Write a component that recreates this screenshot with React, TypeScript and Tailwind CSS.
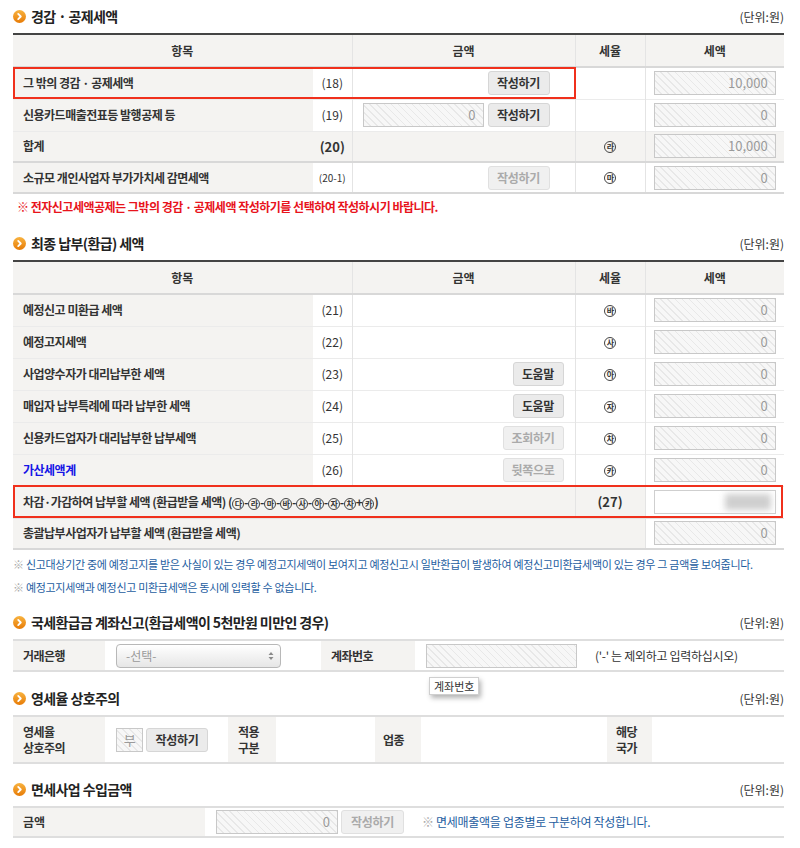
import clsx from "clsx";
import type { ReactNode } from "react";

const HATCH =
  "bg-[repeating-linear-gradient(45deg,#f7f7f7_0px,#f7f7f7_4px,#e8e8e8_4px,#e8e8e8_5px)]";

const Bullet = () => (
  <svg width="13" height="13" viewBox="0 0 13 13" className="shrink-0">
    <defs>
      <linearGradient id="bul" x1="0" y1="0" x2="0" y2="1">
        <stop offset="0" stopColor="#f8b340" />
        <stop offset="1" stopColor="#e77b06" />
      </linearGradient>
    </defs>
    <circle cx="6.5" cy="6.5" r="6.5" fill="url(#bul)" />
    <path d="M5.2 3.9 L7.8 6.5 L5.2 9.1" fill="none" stroke="#fff" strokeWidth="1.8" strokeLinecap="round" strokeLinejoin="round" />
  </svg>
);

// circled hangul mark (㉰, ㉱ ...)
const Circ = ({ ch }: { ch: string }) => (
  <span className="inline-flex h-[12px] w-[12px] items-center justify-center rounded-full border border-[#444] align-middle text-[8px] font-bold leading-none tracking-[-0.8px] text-[#333]">
    {ch}
  </span>
);

const SectionTitle = ({ title }: { title: string }) => (
  <div className="flex h-[33px] items-center justify-between">
    <div className="flex items-center gap-[5px]">
      <Bullet />
      <h2 className="text-[14px] font-bold tracking-[-0.6px] text-[#222]">{title}</h2>
    </div>
    <span className="text-[12px] text-[#333]">(단위:원)</span>
  </div>
);

const ReadOnly = ({ value, className, center }: { value: string; className?: string; center?: boolean }) => (
  <div
    className={clsx(
      "h-6 border border-[#c8c8c8] text-[13px] leading-[22px] text-[#9a9a9a]",
      center ? "text-center" : "pr-[7px] text-right",
      HATCH,
      className
    )}
  >
    {value}
  </div>
);

const Btn = ({ children, disabled, className }: { children: ReactNode; disabled?: boolean; className?: string }) => (
  <button
    type="button"
    className={clsx(
      "h-6 rounded-[3px] border text-[12px] font-bold leading-none tracking-[-0.3px]",
      disabled ? "border-[#e0e0e0] bg-[#f0f0f0] text-[#aaa]" : "border-[#d6d6d6] bg-[#ebebeb] text-[#333]",
      className
    )}
  >
    {children}
  </button>
);

const Note = ({ children }: { children: ReactNode }) => (
  <p className="text-[11px] leading-[23px] tracking-[-0.3px] text-[#1d5d9f]">
    <span className="text-[#aaa]">※</span> {children}
  </p>
);

type Row = {
  label: ReactNode;
  no: string;
  amount?: ReactNode;
  rate?: string;
  tax: string;
  total?: boolean;
};

const rows1: Row[] = [
  {
    label: "그 밖의 경감 · 공제세액",
    no: "(18)",
    amount: <Btn className="w-[62px]">작성하기</Btn>,
    tax: "10,000",
  },
  {
    label: "신용카드매출전표등 발행공제 등",
    no: "(19)",
    amount: (
      <div className="flex justify-end gap-1">
        <ReadOnly value="0" className="w-[121px]" />
        <Btn className="w-[62px]">작성하기</Btn>
      </div>
    ),
    tax: "0",
  },
  { label: "합계", no: "(20)", rate: "라", tax: "10,000", total: true },
  {
    label: "소규모 개인사업자 부가가치세 감면세액",
    no: "(20-1)",
    amount: (
      <Btn disabled className="w-[62px]">
        작성하기
      </Btn>
    ),
    rate: "마",
    tax: "0",
  },
];

const rows2: Row[] = [
  { label: "예정신고 미환급 세액", no: "(21)", rate: "바", tax: "0" },
  { label: "예정고지세액", no: "(22)", rate: "사", tax: "0" },
  { label: "사업양수자가 대리납부한 세액", no: "(23)", amount: <Btn className="w-[51px]">도움말</Btn>, rate: "아", tax: "0" },
  { label: "매입자 납부특례에 따라 납부한 세액", no: "(24)", amount: <Btn className="w-[51px]">도움말</Btn>, rate: "자", tax: "0" },
  {
    label: "신용카드업자가 대리납부한 납부세액",
    no: "(25)",
    amount: (
      <Btn disabled className="w-[61px]">
        조회하기
      </Btn>
    ),
    rate: "차",
    tax: "0",
  },
  {
    label: <span className="text-[#1515e6]">가산세액계</span>,
    no: "(26)",
    amount: (
      <Btn disabled className="w-[61px]">
        뒷쪽으로
      </Btn>
    ),
    rate: "카",
    tax: "0",
  },
];

const ColsMain = () => (
  <colgroup>
    <col className="w-[300px]" />
    <col className="w-[39px]" />
    <col className="w-[223px]" />
    <col className="w-[70px]" />
    <col />
  </colgroup>
);

const HeadMain = () => (
  <thead>
    <tr className="h-[33px] border-t-2 border-b-2 border-t-[#444] border-b-[#d8d8d8] bg-[#f4f3f1] text-[12px] font-bold">
      <th colSpan={2}>항목</th>
      <th className="border-l border-[#e4e4e4]">금액</th>
      <th className="border-l border-[#e4e4e4]">세율</th>
      <th className="border-l border-[#e4e4e4]">세액</th>
    </tr>
  </thead>
);

const MainRow = ({ r, pr, last }: { r: Row; pr: string; last?: boolean }) => (
  <tr
    className={clsx(
      r.total || last ? "h-[31px] border-b-2 border-[#d8d8d8]" : "h-[32px] border-b border-[#ebebeb]",
      r.total && "bg-[#f4f3f1]"
    )}
  >
    <td className="bg-[#f4f3f1] pl-[10px] font-bold tracking-[-0.5px]">{r.label}</td>
    <td
      className={clsx(
        "text-center",
        r.total ? "text-[13px] font-bold" : r.no.length > 4 ? "text-[10px]" : "text-[12px]"
      )}
    >
      {r.no}
    </td>
    <td className={clsx("border-l border-[#e4e4e4] text-right", pr)}>
      <div className="flex justify-end">{r.amount}</div>
    </td>
    <td className="border-l border-[#e4e4e4] text-center leading-none">{r.rate && <Circ ch={r.rate} />}</td>
    <td className="border-l border-[#e4e4e4]">
      <ReadOnly value={r.tax} className="mx-auto w-[122px]" />
    </td>
  </tr>
);

const FORMULA = ["다", "라", "마", "바", "사", "아", "자", "차"];

export default function App() {
  return (
    <div className="min-h-[848px] bg-white font-[family-name:'Noto_Sans_CJK_KR','Noto_Sans',sans-serif] text-[12px] text-[#333]">
      <div className="ml-[13px] w-[771px]">
        {/* 경감 · 공제세액 */}
        <SectionTitle title="경감 · 공제세액" />
        <div className="relative">
          <table className="w-full table-fixed border-collapse">
            <ColsMain />
            <HeadMain />
            <tbody>
              {rows1.map((r, i) => (
                <MainRow key={r.no} r={r} pr="pr-[25px]" last={i === rows1.length - 1} />
              ))}
            </tbody>
          </table>
          <div className="pointer-events-none absolute left-0 top-[34px] h-[32px] w-[563px] border-2 border-[#f0301c]" />
        </div>
        <p className="h-[26px] pl-[4px] text-[12px] font-bold leading-[26px] tracking-[-0.5px] text-[#e8141c]">
          ※ 전자신고세액공제는 그밖의 경감 · 공제세액 작성하기를 선택하여 작성하시기 바랍니다.
        </p>

        {/* 최종 납부(환급) 세액 */}
        <div className="mt-[7px]">
          <SectionTitle title="최종 납부(환급) 세액" />
        </div>
        <div className="relative">
          <table className="w-full table-fixed border-collapse">
            <ColsMain />
            <HeadMain />
            <tbody>
              {rows2.map((r) => (
                <MainRow key={r.no} r={r} pr="pr-[11px]" />
              ))}
              <tr className="h-[32px] border-b border-[#e4e4e4] bg-[#f4f3f1]">
                <td colSpan={3} className="pl-[10px] font-bold tracking-[-0.5px]">
                  차감·가감하여 납부할 세액 (환급받을 세액) (
                  {FORMULA.map((c, i) => (
                    <span key={c}>
                      {i > 0 && "-"}
                      <Circ ch={c} />
                    </span>
                  ))}
                  +<Circ ch="카" />)
                </td>
                <td className="border-l border-[#e4e4e4] text-center text-[13px] font-bold">(27)</td>
                <td className="border-l border-[#e4e4e4] bg-white">
                  <div className="mx-auto flex h-6 w-[122px] items-center justify-end border border-[#cfcfcf] bg-white pr-[4px]">
                    <div className="h-[16px] w-[46px] bg-[#cfcfcf] blur-[3px]" />
                  </div>
                </td>
              </tr>
              <tr className="h-[31px] border-b-2 border-[#d8d8d8]">
                <td colSpan={4} className="bg-[#f4f3f1] pl-[10px] font-bold tracking-[-0.5px]">
                  총괄납부사업자가 납부할 세액 (환급받을 세액)
                </td>
                <td className="border-l border-[#e4e4e4]">
                  <ReadOnly value="0" className="mx-auto w-[122px]" />
                </td>
              </tr>
            </tbody>
          </table>
          <div className="pointer-events-none absolute left-0 top-[225px] h-[33px] w-[770px] border-2 border-[#f0301c]" />
        </div>
        <div className="pt-[3px]">
          <Note>
            신고대상기간 중에 예정고지를 받은 사실이 있는 경우 예정고지세액이 보여지고 예정신고시 일반환급이 발생하여
            예정신고미환급세액이 있는 경우 그 금액을 보여줍니다.
          </Note>
          <Note>예정고지세액과 예정신고 미환급세액은 동시에 입력할 수 없습니다.</Note>
        </div>

        {/* 국세환급금 계좌신고 */}
        <div className="mt-[7px]">
          <SectionTitle title="국세환급금 계좌신고(환급세액이 5천만원 미만인 경우)" />
        </div>
        <div className="relative">
          <table className="w-full table-fixed border-collapse">
            <colgroup>
              <col className="w-[92px]" />
              <col className="w-[216px]" />
              <col className="w-[94px]" />
              <col />
            </colgroup>
            <tbody>
              <tr className="h-[31px] border-y-2 border-[#dedede]">
                <td className="bg-[#f4f3f1] pl-[10px] font-bold tracking-[-0.5px]">거래은행</td>
                <td className="pl-[11px]">
                  <div className="flex h-6 w-[165px] items-center justify-between rounded-[4px] border border-[#b8b8b8] bg-[linear-gradient(#ffffff,#e6e6e6)] pl-[9px] pr-[6px] text-[12px] text-[#9a9a9a] shadow-[inset_0_1px_0_#fff]">
                    <span>-선택-</span>
                    <svg width="6" height="10" viewBox="0 0 6 10">
                      <path d="M3 1 L5.5 4 H0.5 Z M3 9 L5.5 6 H0.5 Z" fill="#8a8a8a" />
                    </svg>
                  </div>
                </td>
                <td className="bg-[#f4f3f1] pl-[10px] font-bold tracking-[-0.5px]">계좌번호</td>
                <td className="pl-[11px]">
                  <div className="flex items-center gap-[18px]">
                    <ReadOnly value="" className="w-[151px]" />
                    <span className="text-[12px] tracking-[-0.3px] text-[#333]">('-' 는 제외하고 입력하십시오)</span>
                  </div>
                </td>
              </tr>
            </tbody>
          </table>
          <div className="absolute left-[416px] top-[38px] z-10 border border-[#cfcfcf] bg-white px-[4px] text-[11px] leading-[16px] text-[#333] shadow-[2px_3px_5px_rgba(0,0,0,0.3)]">
            계좌번호
          </div>
        </div>

        {/* 영세율 상호주의 */}
        <div className="mt-[10px]">
          <SectionTitle title="영세율 상호주의" />
        </div>
        <table className="w-full table-fixed border-collapse">
          <colgroup>
            <col className="w-[92px]" />
            <col className="w-[123px]" />
            <col className="w-[48px]" />
            <col className="w-[99px]" />
            <col className="w-[46px]" />
            <col className="w-[186px]" />
            <col className="w-[45px]" />
            <col />
          </colgroup>
          <tbody>
            <tr className="h-[47px] border-y-2 border-[#dedede] font-bold leading-[16px] tracking-[-0.5px]">
              <td className="bg-[#f4f3f1] pl-[10px]">
                영세율
                <br />
                상호주의
              </td>
              <td className="pl-[11px]">
                <div className="flex gap-[3px]">
                  <ReadOnly value="부" center className="w-[27px] font-normal" />
                  <Btn className="w-[62px]">작성하기</Btn>
                </div>
              </td>
              <td className="bg-[#f4f3f1] pl-[10px]">
                적용
                <br />
                구분
              </td>
              <td />
              <td className="bg-[#f4f3f1] pl-[8px]">업종</td>
              <td />
              <td className="bg-[#f4f3f1] pl-[9px]">
                해당
                <br />
                국가
              </td>
              <td />
            </tr>
          </tbody>
        </table>

        {/* 면세사업 수입금액 */}
        <div className="mt-[9px]">
          <SectionTitle title="면세사업 수입금액" />
        </div>
        <table className="w-full table-fixed border-collapse">
          <colgroup>
            <col className="w-[192px]" />
            <col />
          </colgroup>
          <tbody>
            <tr className="h-[30px] border-y-2 border-[#dedede]">
              <td className="bg-[#f4f3f1] pl-[10px] font-bold">금액</td>
              <td className="pl-[11px]">
                <div className="flex items-center">
                  <ReadOnly value="0" className="w-[122px]" />
                  <Btn disabled className="ml-[3px] w-[63px]">
                    작성하기
                  </Btn>
                  <span className="ml-[18px] text-[12px] tracking-[-0.3px] text-[#1d5d9f]">
                    <span className="text-[#aaa]">※</span> 면세매출액을 업종별로 구분하여 작성합니다.
                  </span>
                </div>
              </td>
            </tr>
          </tbody>
        </table>
      </div>
    </div>
  );
}
